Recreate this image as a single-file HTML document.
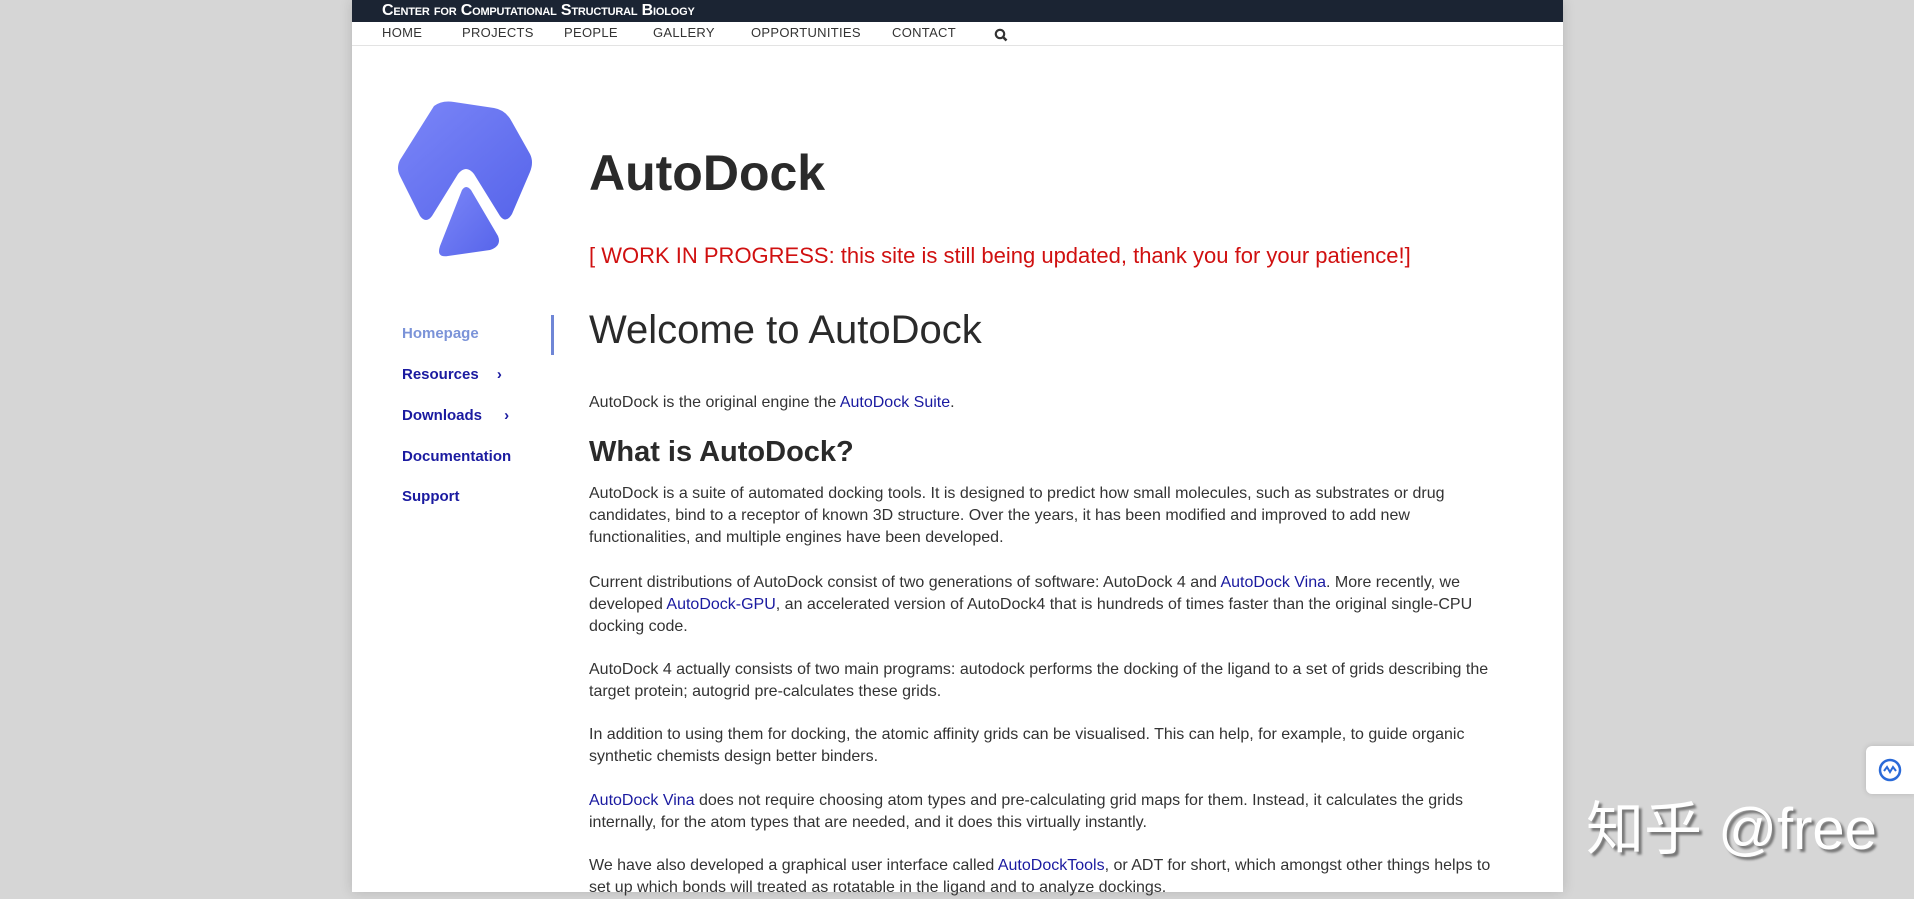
<!DOCTYPE html>
<html><head><meta charset="utf-8"><style>
*{margin:0;padding:0;box-sizing:border-box}
body{width:1914px;height:892px;overflow:hidden;background:#d6d6d6;font-family:"Liberation Sans",sans-serif;position:relative}
.page{position:absolute;left:352px;top:0;width:1211px;height:892px;background:#fff;box-shadow:0 0 12px rgba(0,0,0,.15)}
.bar{position:absolute;left:0;top:0;width:1211px;height:22px;background:#1b2433;color:#fff;font-weight:bold;font-size:16px;padding-left:30px;line-height:21px;font-variant:small-caps;letter-spacing:-.2px}
.nav{position:absolute;left:0;top:22px;width:1211px;height:24px;border-bottom:1px solid #e3e3e3}
.nav span{position:absolute;top:3px;font-size:13px;color:#333;letter-spacing:.3px}
.abs{position:absolute;white-space:nowrap}
.side{font-size:15px;font-weight:bold;color:#1a1aa0}
.p{position:absolute;left:237px;font-size:16px;line-height:22px;color:#333;width:950px;white-space:nowrap}
a{color:#1a1aa0;text-decoration:none}
</style></head><body>
<div class="page">
<div class="bar">Center for Computational Structural Biology</div>
<div class="nav">
<span style="left:30px">HOME</span><span style="left:110px">PROJECTS</span><span style="left:212px">PEOPLE</span><span style="left:301px">GALLERY</span><span style="left:399px">OPPORTUNITIES</span><span style="left:540px">CONTACT</span>
<svg style="position:absolute;left:642px;top:6px" width="14" height="14" viewBox="0 0 14 14"><circle cx="6" cy="6" r="4.2" fill="none" stroke="#333" stroke-width="2.2"/><path d="M9 9l3.5 3.5" stroke="#333" stroke-width="2.6"/></svg>
</div>
<svg class="abs" style="left:42px;top:98px" width="142" height="170" viewBox="0 0 142 170">
<defs><linearGradient id="g" x1="0" y1="0" x2="1" y2="1"><stop offset="0" stop-color="#7b86f8"/><stop offset="1" stop-color="#5664ea"/></linearGradient></defs>
<path d="M40 8 Q48 2 60 4 L100 10 Q112 12 118 24 L136 56 Q140 64 136 74 L118 116 Q112 126 106 118 L80 76 Q72 66 64 76 L38 118 Q32 126 26 118 L6 78 Q2 70 6 62 Z" fill="url(#g)"/>
<path d="M68 92 Q72 86 77 92 L104 138 Q108 148 96 152 L54 158 Q42 160 46 148 Z" fill="url(#g)"/>
</svg>
<div class="abs" style="left:237px;top:144px;font-size:50px;font-weight:bold;color:#2a2a2a">AutoDock</div>
<div class="abs" style="left:237px;top:243px;font-size:22px;color:#d01010">[ WORK IN PROGRESS: this site is still being updated, thank you for your patience!]</div>
<div class="abs side" style="left:50px;top:325px;color:#7b93d8">Homepage</div>
<div class="abs" style="left:199px;top:315px;width:3px;height:40px;background:#6f86d6"></div>
<div class="abs side" style="left:50px;top:366px">Resources <span style="margin-left:14px">›</span></div>
<div class="abs side" style="left:50px;top:407px">Downloads <span style="margin-left:18px">›</span></div>
<div class="abs side" style="left:50px;top:448px">Documentation</div>
<div class="abs side" style="left:50px;top:488px">Support</div>
<div class="abs" style="left:237px;top:308px;font-size:40px;color:#2a2a2a">Welcome to AutoDock</div>
<div class="p" style="top:392px">AutoDock is the original engine the <a>AutoDock Suite</a>.</div>
<div class="abs" style="left:237px;top:436px;font-size:29px;font-weight:bold;color:#2a2a2a">What is AutoDock?</div>
<div class="p" style="top:483px">AutoDock is a suite of automated docking tools. It is designed to predict how small molecules, such as substrates or drug<br>candidates, bind to a receptor of known 3D structure. Over the years, it has been modified and improved to add new<br>functionalities, and multiple engines have been developed.</div>
<div class="p" style="top:572px">Current distributions of AutoDock consist of two generations of software: AutoDock 4 and <a>AutoDock Vina</a>. More recently, we<br>developed <a>AutoDock-GPU</a>, an accelerated version of AutoDock4 that is hundreds of times faster than the original single-CPU<br>docking code.</div>
<div class="p" style="top:659px">AutoDock 4 actually consists of two main programs: autodock performs the docking of the ligand to a set of grids describing the<br>target protein; autogrid pre-calculates these grids.</div>
<div class="p" style="top:724px">In addition to using them for docking, the atomic affinity grids can be visualised. This can help, for example, to guide organic<br>synthetic chemists design better binders.</div>
<div class="p" style="top:790px"><a>AutoDock Vina</a> does not require choosing atom types and pre-calculating grid maps for them. Instead, it calculates the grids<br>internally, for the atom types that are needed, and it does this virtually instantly.</div>
<div class="p" style="top:855px">We have also developed a graphical user interface called <a>AutoDockTools</a>, or ADT for short, which amongst other things helps to<br>set up which bonds will treated as rotatable in the ligand and to analyze dockings.</div>
</div>
<div class="abs" style="left:1586px;top:782px;font-size:58px;color:#fff;font-family:'Liberation Sans','Noto Sans CJK SC',sans-serif;text-shadow:3px 3px 2px #777">知乎 @free</div>
<div class="abs" style="left:1866px;top:746px;width:48px;height:48px;background:#fff;border-radius:6px 0 0 6px;box-shadow:0 0 6px rgba(0,0,0,.15)">
<svg style="position:absolute;left:12px;top:12px" width="24" height="24" viewBox="0 0 24 24"><circle cx="12" cy="12" r="10" fill="none" stroke="#2a6ad8" stroke-width="2.5"/><path d="M6 13l3-4 3 5 3-5 3 4" fill="none" stroke="#2a6ad8" stroke-width="2"/></svg>
</div>
</body></html>
